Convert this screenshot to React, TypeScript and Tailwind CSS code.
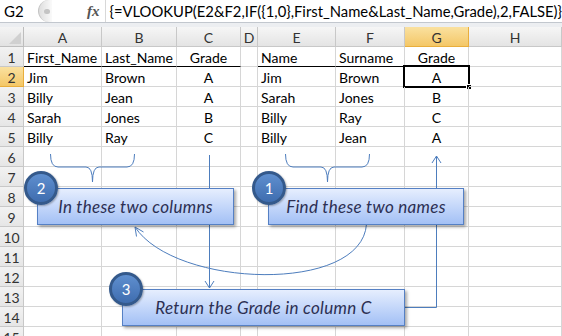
import React from 'react';

const cols = ['A', 'B', 'C', 'D', 'E', 'F', 'G', 'H'];

const rows: string[][] = [
  ['First_Name', 'Last_Name', 'Grade', '', 'Name', 'Surname', 'Grade', ''],
  ['Jim', 'Brown', 'A', '', 'Jim', 'Brown', 'A', ''],
  ['Billy', 'Jean', 'A', '', 'Sarah', 'Jones', 'B', ''],
  ['Sarah', 'Jones', 'B', '', 'Billy', 'Ray', 'C', ''],
  ['Billy', 'Ray', 'C', '', 'Billy', 'Jean', 'A', ''],
];

const centered = [2, 6];
const underlined = [0, 1, 2, 4, 5, 6];

const Callout = ({ num, text, className, badge }: { num: string; text: string; className: string; badge: string }) => (
  <>
    <div
      className={`absolute flex items-center justify-center border border-[#5580c4] bg-gradient-to-b from-[#e6eefe] to-[#a3c0f5] shadow-[2px_2px_3px_rgba(0,0,0,0.35)] ${className}`}
    >
      <span className="font-['Lato'] text-[17px] italic tracking-[0.3px] text-[#2c2f52]">{text}</span>
    </div>
    <div
      className={`absolute flex h-[34px] w-[34px] items-center justify-center rounded-full border-[3px] border-[#34598b] bg-gradient-to-b from-[#5f8fcf] to-[#3f6daf] shadow-[1px_1px_2px_rgba(0,0,0,0.3)] ${badge}`}
    >
      <span className="font-['Lato'] text-[15px] text-white">{num}</span>
    </div>
  </>
);

export default function App() {
  return (
    <div className="relative h-[336px] w-[562px] overflow-hidden bg-white font-['Lato',sans-serif]">
      {/* Formula bar */}
      <div className="flex h-[23px] border-b border-[#c2c7ce] bg-white">
        <div className="flex w-[47px] items-center pl-[4px] text-[15px] text-black">G2</div>
        <div className="flex w-[18px] items-center justify-center rounded-l-full border-l border-[#c4c4c4] bg-gradient-to-r from-[#dedede] to-[#fafafa]">
          <span className="ml-[4px] h-[5px] w-[6px] rounded-full bg-[#c4c4c4]" />
        </div>
        <div className="flex w-[67px] items-center justify-end pr-[6px]">
          <span className="font-['Liberation_Serif',serif] text-[15px] font-bold italic text-[#555]">fx</span>
        </div>
        <div className="flex flex-1 items-center border-l border-[#d8d8d8] pl-[3px] text-[14.8px] whitespace-nowrap text-black">
          {'{=VLOOKUP(E2&F2,IF({1,0},First_Name&Last_Name,Grade),2,FALSE)}'}
        </div>
      </div>
      <div className="h-[4px] bg-[#eceef1]" />

      {/* Sheet */}
      <div className="grid grid-cols-[24px_78px_75px_64px_17px_78px_69px_64px_93px] auto-rows-[20px] text-[14px]">
        <div className="relative border-r border-b border-[#bdbdbd] bg-gradient-to-b from-[#f4f4f4] to-[#e2e2e2]">
          <svg className="absolute right-[2px] bottom-[2px]" width="12" height="12">
            <polygon points="12,0 12,12 0,12" fill="#d0d0d0" />
          </svg>
        </div>
        {cols.map((c) => (
          <div
            key={c}
            className={
              c === 'G'
                ? 'border-r border-b border-[#e9ae3c] bg-gradient-to-b from-[#fae19f] to-[#f4c766] pt-[2px] text-center leading-[17px] text-[#333]'
                : 'border-r border-b border-[#c8c8c8] bg-gradient-to-b from-[#f6f6f6] to-[#e4e4e4] pt-[2px] text-center leading-[17px] text-[#333]'
            }
          >
            {c}
          </div>
        ))}

        {Array.from({ length: 15 }, (_, r) => (
          <React.Fragment key={r}>
            <div
              className={
                r === 1
                  ? 'border-r border-b border-[#e9ae3c] bg-gradient-to-b from-[#fae19f] to-[#f4c766] pt-[2px] text-center leading-[17px] text-[#333]'
                  : 'border-r border-b border-[#c8c8c8] bg-gradient-to-b from-[#f2f2f2] to-[#e6e6e6] pt-[2px] text-center leading-[17px] text-[#333]'
              }
            >
              {r + 1}
            </div>
            {cols.map((_, c) => {
              const val = rows[r]?.[c] ?? '';
              const line = r === 0 && underlined.includes(c) ? 'border-b-black' : 'border-b-[#d6d6d6]';
              return (
                <div
                  key={c}
                  className={`relative border-r border-b border-r-[#d6d6d6] ${line} pt-[2px] leading-[17px] whitespace-nowrap text-black ${
                    centered.includes(c) ? 'text-center' : 'pl-[3px]'
                  }`}
                >
                  {val}
                  {r === 1 && c === 6 && (
                    <div className="absolute -top-[2px] -left-[2px] h-[23px] w-[67px] border-2 border-black">
                      <span className="absolute -right-[4px] -bottom-[4px] h-[6px] w-[6px] border border-white bg-black" />
                    </div>
                  )}
                </div>
              );
            })}
          </React.Fragment>
        ))}
      </div>

      {/* Connectors */}
      <svg className="pointer-events-none absolute inset-0" width="562" height="336" fill="none" stroke="#4d7dbd" strokeWidth="1">
        <path d="M50.5 154 Q50.5 167 58 167 L86 167 Q92.5 167 92.5 182 M92.5 182 Q92.5 167 99 167 L127 167 Q134.5 167 134.5 154" />
        <path d="M285.5 154 Q285.5 167 293 167 L321 167 Q327.5 167 327.5 182 M327.5 182 Q327.5 167 334 167 L362 167 Q369.5 167 369.5 154" />
        <path d="M209.5 155 L209.5 288 M205 281 L209.5 288 L214 281" />
        <path d="M404 307.5 L436.5 307.5 L436.5 156 M432 163 L436.5 156 L441 163" />
        <path d="M366.5 224 C362 294 175 288 135 227 M143.5 232 L135 227 L136.5 236.5" />
      </svg>

      <Callout num="2" text="In these two columns" className="left-[37px] top-[188px] h-[37px] w-[197px]" badge="left-[24px] top-[171px]" />
      <Callout num="1" text="Find these two names" className="left-[268px] top-[188px] h-[37px] w-[196px]" badge="left-[252px] top-[171px]" />
      <Callout num="3" text="Return the Grade in column C" className="left-[122px] top-[289px] h-[37px] w-[283px]" badge="left-[109px] top-[272px]" />
    </div>
  );
}
